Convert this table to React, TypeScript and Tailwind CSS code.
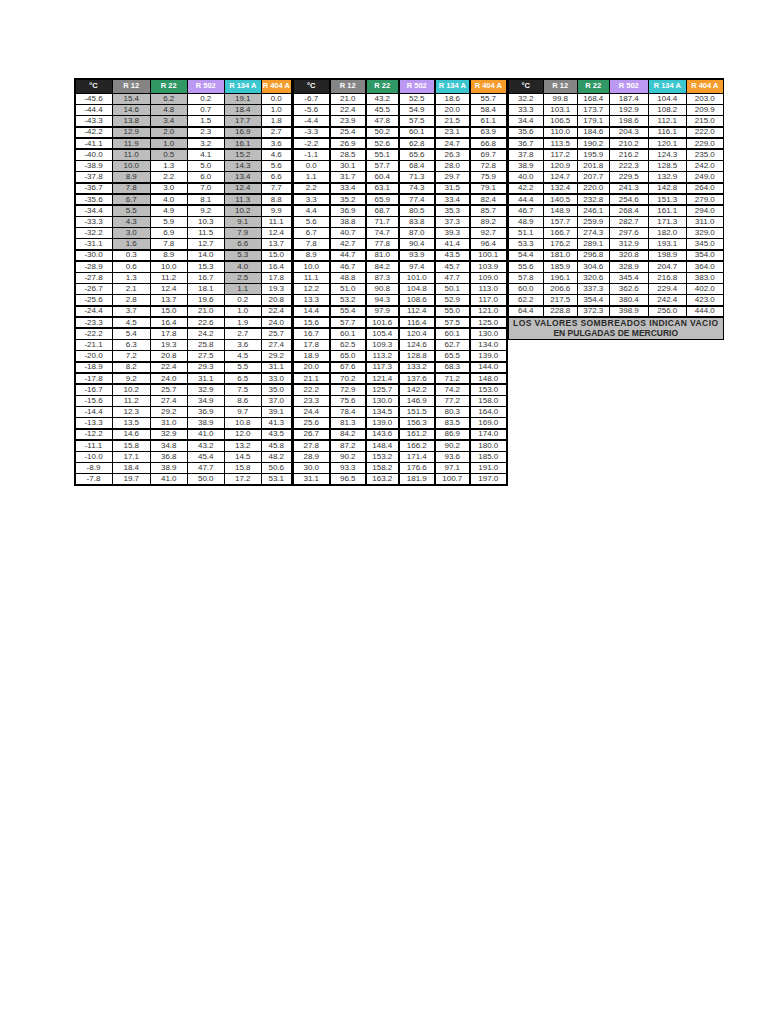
import React from "react";

const g1: string[][] = [
  ["-45.6", "15.4", "6.2", "0.2", "19.1", "0.0"],
  ["-44.4", "14.6", "4.8", "0.7", "18.4", "1.0"],
  ["-43.3", "13.8", "3.4", "1.5", "17.7", "1.8"],
  ["-42.2", "12.9", "2.0", "2.3", "16.9", "2.7"],
  ["-41.1", "11.9", "1.0", "3.2", "16.1", "3.6"],
  ["-40.0", "11.0", "0.5", "4.1", "15.2", "4.6"],
  ["-38.9", "10.0", "1.3", "5.0", "14.3", "5.6"],
  ["-37.8", "8.9", "2.2", "6.0", "13.4", "6.6"],
  ["-36.7", "7.8", "3.0", "7.0", "12.4", "7.7"],
  ["-35.6", "6.7", "4.0", "8.1", "11.3", "8.8"],
  ["-34.4", "5.5", "4.9", "9.2", "10.2", "9.9"],
  ["-33.3", "4.3", "5.9", "10.3", "9.1", "11.1"],
  ["-32.2", "3.0", "6.9", "11.5", "7.9", "12.4"],
  ["-31.1", "1.6", "7.8", "12.7", "6.6", "13.7"],
  ["-30.0", "0.3", "8.9", "14.0", "5.3", "15.0"],
  ["-28.9", "0.6", "10.0", "15.3", "4.0", "16.4"],
  ["-27.8", "1.3", "11.2", "16.7", "2.5", "17.8"],
  ["-26.7", "2.1", "12.4", "18.1", "1.1", "19.3"],
  ["-25.6", "2.8", "13.7", "19.6", "0.2", "20.8"],
  ["-24.4", "3.7", "15.0", "21.0", "1.0", "22.4"],
  ["-23.3", "4.5", "16.4", "22.6", "1.9", "24.0"],
  ["-22.2", "5.4", "17.8", "24.2", "2.7", "25.7"],
  ["-21.1", "6.3", "19.3", "25.8", "3.6", "27.4"],
  ["-20.0", "7.2", "20.8", "27.5", "4.5", "29.2"],
  ["-18.9", "8.2", "22.4", "29.3", "5.5", "31.1"],
  ["-17.8", "9.2", "24.0", "31.1", "6.5", "33.0"],
  ["-16.7", "10.2", "25.7", "32.9", "7.5", "35.0"],
  ["-15.6", "11.2", "27.4", "34.9", "8.6", "37.0"],
  ["-14.4", "12.3", "29.2", "36.9", "9.7", "39.1"],
  ["-13.3", "13.5", "31.0", "38.9", "10.8", "41.3"],
  ["-12.2", "14.6", "32.9", "41.0", "12.0", "43.5"],
  ["-11.1", "15.8", "34.8", "43.2", "13.2", "45.8"],
  ["-10.0", "17.1", "36.8", "45.4", "14.5", "48.2"],
  ["-8.9", "18.4", "38.9", "47.7", "15.8", "50.6"],
  ["-7.8", "19.7", "41.0", "50.0", "17.2", "53.1"],
];

const g2: string[][] = [
  ["-6.7", "21.0", "43.2", "52.5", "18.6", "55.7"],
  ["-5.6", "22.4", "45.5", "54.9", "20.0", "58.4"],
  ["-4.4", "23.9", "47.8", "57.5", "21.5", "61.1"],
  ["-3.3", "25.4", "50.2", "60.1", "23.1", "63.9"],
  ["-2.2", "26.9", "52.6", "62.8", "24.7", "66.8"],
  ["-1.1", "28.5", "55.1", "65.6", "26.3", "69.7"],
  ["0.0", "30.1", "57.7", "68.4", "28.0", "72.8"],
  ["1.1", "31.7", "60.4", "71.3", "29.7", "75.9"],
  ["2.2", "33.4", "63.1", "74.3", "31.5", "79.1"],
  ["3.3", "35.2", "65.9", "77.4", "33.4", "82.4"],
  ["4.4", "36.9", "68.7", "80.5", "35.3", "85.7"],
  ["5.6", "38.8", "71.7", "83.8", "37.3", "89.2"],
  ["6.7", "40.7", "74.7", "87.0", "39.3", "92.7"],
  ["7.8", "42.7", "77.8", "90.4", "41.4", "96.4"],
  ["8.9", "44.7", "81.0", "93.9", "43.5", "100.1"],
  ["10.0", "46.7", "84.2", "97.4", "45.7", "103.9"],
  ["11.1", "48.8", "87.3", "101.0", "47.7", "109.0"],
  ["12.2", "51.0", "90.8", "104.8", "50.1", "113.0"],
  ["13.3", "53.2", "94.3", "108.6", "52.9", "117.0"],
  ["14.4", "55.4", "97.9", "112.4", "55.0", "121.0"],
  ["15.6", "57.7", "101.6", "116.4", "57.5", "125.0"],
  ["16.7", "60.1", "105.4", "120.4", "60.1", "130.0"],
  ["17.8", "62.5", "109.3", "124.6", "62.7", "134.0"],
  ["18.9", "65.0", "113.2", "128.8", "65.5", "139.0"],
  ["20.0", "67.6", "117.3", "133.2", "68.3", "144.0"],
  ["21.1", "70.2", "121.4", "137.6", "71.2", "148.0"],
  ["22.2", "72.9", "125.7", "142.2", "74.2", "153.0"],
  ["23.3", "75.6", "130.0", "146.9", "77.2", "158.0"],
  ["24.4", "78.4", "134.5", "151.5", "80.3", "164.0"],
  ["25.6", "81.3", "139.0", "156.3", "83.5", "169.0"],
  ["26.7", "84.2", "143.6", "161.2", "86.9", "174.0"],
  ["27.8", "87.2", "148.4", "166.2", "90.2", "180.0"],
  ["28.9", "90.2", "153.2", "171.4", "93.6", "185.0"],
  ["30.0", "93.3", "158.2", "176.6", "97.1", "191.0"],
  ["31.1", "96.5", "163.2", "181.9", "100.7", "197.0"],
];

const g3: string[][] = [
  ["32.2", "99.8", "168.4", "187.4", "104.4", "203.0"],
  ["33.3", "103.1", "173.7", "192.9", "108.2", "209.9"],
  ["34.4", "106.5", "179.1", "198.6", "112.1", "215.0"],
  ["35.6", "110.0", "184.6", "204.3", "116.1", "222.0"],
  ["36.7", "113.5", "190.2", "210.2", "120.1", "229.0"],
  ["37.8", "117.2", "195.9", "216.2", "124.3", "235.0"],
  ["38.9", "120.9", "201.8", "222.3", "128.5", "242.0"],
  ["40.0", "124.7", "207.7", "229.5", "132.9", "249.0"],
  ["42.2", "132.4", "220.0", "241.3", "142.8", "264.0"],
  ["44.4", "140.5", "232.8", "254.6", "151.3", "279.0"],
  ["46.7", "148.9", "246.1", "268.4", "161.1", "294.0"],
  ["48.9", "157.7", "259.9", "282.7", "171.3", "311.0"],
  ["51.1", "166.7", "274.3", "297.6", "182.0", "329.0"],
  ["53.3", "176.2", "289.1", "312.9", "193.1", "345.0"],
  ["54.4", "181.0", "296.8", "320.8", "198.9", "354.0"],
  ["55.6", "185.9", "304.6", "328.9", "204.7", "364.0"],
  ["57.8", "196.1", "320.6", "345.4", "216.8", "383.0"],
  ["60.0", "206.6", "337.3", "362.6", "229.4", "402.0"],
  ["62.2", "217.5", "354.4", "380.4", "242.4", "423.0"],
  ["64.4", "228.8", "372.3", "398.9", "256.0", "444.0"],
];

const headers: { label: string; cls: string }[] = [
  { label: "°C", cls: "bg-[#242424]" },
  { label: "R 12", cls: "bg-[#858585]" },
  { label: "R 22", cls: "bg-[#2f9865]" },
  { label: "R 502", cls: "bg-[#bb98f2]" },
  { label: "R 134 A", cls: "bg-[#3cc6cf]" },
  { label: "R 404 A", cls: "bg-[#f59c2c]" },
];

function isShaded(group: number, row: number, col: number) {
  if (group !== 0) return false;
  if (col === 1) return row < 14;
  if (col === 2) return row < 6;
  if (col === 4) return row < 18;
  return false;
}

function Header() {
  return (
    <>
      {headers.map((h) => (
        <div
          key={h.label}
          className={`${h.cls} flex items-center justify-center text-white font-bold text-[7.5px] leading-none`}
        >
          {h.label}
        </div>
      ))}
    </>
  );
}

function Cells({ data, group }: { data: string[][]; group: number }) {
  return (
    <>
      {data.map((row, r) =>
        row.map((v, c) => (
          <div
            key={`${r}-${c}`}
            className={`${
              isShaded(group, r, c) ? "bg-[#bdbdbd]" : "bg-white"
            } flex items-center justify-center text-[8px] leading-none text-[#333]`}
          >
            {v}
          </div>
        ))
      )}
    </>
  );
}

export default function App() {
  return (
    <div className="min-h-[1024px] w-[768px] bg-white pl-[74px] pt-[78px] font-['Liberation_Sans',Arial,sans-serif]">
      <div className="flex items-start">
        <div className="grid grid-cols-[36px_36.5px_35.5px_35.5px_35.5px_28.5px] grid-rows-[13px_repeat(35,9.7px)] gap-[1.5px] bg-black p-[1.5px]">
          <Header />
          <Cells data={g1} group={0} />
        </div>
        <div className="grid grid-cols-[35.5px_34.5px_31.5px_34.5px_33.5px_35.5px] grid-rows-[13px_repeat(35,9.7px)] gap-[1.5px] bg-black p-[1.5px]">
          <Header />
          <Cells data={g2} group={1} />
        </div>
        <div className="grid grid-cols-[33.5px_32.5px_30.5px_37.5px_36.5px_35.5px] grid-rows-[13px_repeat(22,9.7px)] gap-[1.5px] bg-black p-[1.5px]">
          <Header />
          <Cells data={g3} group={2} />
          <div className="col-span-6 row-span-2 flex flex-col items-center justify-center bg-[#bdbdbd] text-[8.5px] font-bold leading-[10px] text-[#2a2a2a]">
            <span className="tracking-[0.4px]">LOS VALORES SOMBREADOS INDICAN VACIO</span>
            <span>EN PULGADAS DE MERCURIO</span>
          </div>
        </div>
      </div>
    </div>
  );
}
